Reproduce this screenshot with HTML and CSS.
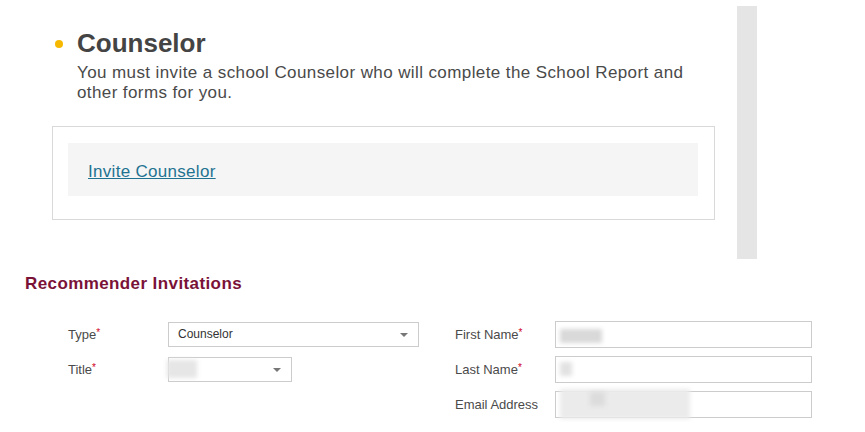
FILE: index.html
```html
<!DOCTYPE html>
<html lang="en">
<head>
    <meta charset="UTF-8">
    <meta name="viewport" content="width=device-width, initial-scale=1.0">
    <title>Counselor</title>
    <link rel="stylesheet" href="styles.css">
</head>
<body>
    <div class="top">
        <div class="section">
            <div class="section-head">
                <span class="bullet"></span>
                <h2>Counselor</h2>
            </div>
            <p class="intro">You must invite a school Counselor who will complete the School Report and other forms for you.</p>
            <div class="invite-box">
                <div class="invite-inner">
                    <a href="#" class="invite-link">Invite Counselor</a>
                </div>
            </div>
        </div>
        <div class="scrollbar"></div>
    </div>

    <div class="bottom">
        <h3>Recommender Invitations</h3>
        <form class="invite-form" onsubmit="event.preventDefault();">
            <div class="col">
                <div class="row">
                    <label>Type<span class="req">*</span></label>
                    <div class="select wide">Counselor<span class="arrow"></span></div>
                </div>
                <div class="row">
                    <label>Title<span class="req">*</span></label>
                    <div class="select narrow"><span class="smudge s1"></span><span class="arrow"></span></div>
                </div>
            </div>
            <div class="col">
                <div class="row">
                    <label>First Name<span class="req">*</span></label>
                    <div class="input"><span class="smudge s2"></span></div>
                </div>
                <div class="row">
                    <label>Last Name<span class="req">*</span></label>
                    <div class="input"><span class="smudge s3"></span></div>
                </div>
                <div class="row">
                    <label>Email Address</label>
                    <div class="input"><span class="smudge s4"></span><span class="smudge s5"></span></div>
                </div>
            </div>
        </form>
    </div>
</body>
</html>
```

FILE: styles.css
```css
body {
    margin: 0;
    background: #fff;
    font-family: "Liberation Sans", Arial, sans-serif;
    color: #444;
}
.top {
    display: flex;
    height: 260px;
}
.section {
    width: 663px;
    padding: 28px 0 0 52px;
}
.section-head {
    display: flex;
    align-items: center;
    height: 30px;
}
.bullet {
    width: 8px;
    height: 8px;
    margin: 2px 14px 0 3px;
    border-radius: 50%;
    background: #f6b800;
}
.section-head h2 {
    margin: 0;
    font-size: 26px;
    line-height: 30px;
    color: #444;
}
.intro {
    margin: 5px 0 0 25px;
    font-size: 17px;
    line-height: 20px;
    letter-spacing: 0.4px;
    color: #4a4a4a;
    width: 630px;
}
.invite-box {
    margin-top: 23px;
    border: 1px solid #d9d9d9;
    padding: 16px 16px 23px 15px;
}
.invite-inner {
    background: #f5f5f5;
    height: 53px;
    display: flex;
    align-items: center;
    padding: 4px 0 0 20px;
    box-sizing: border-box;
}
.invite-link {
    color: #1f7391;
    font-size: 17px;
    letter-spacing: 0.3px;
    text-decoration: underline;
}
.scrollbar {
    width: 20px;
    height: 253px;
    margin: 6px 0 0 22px;
    background: #e5e5e5;
}
.bottom {
    padding: 14px 0 0 25px;
}
.bottom h3 {
    margin: 0;
    font-size: 17px;
    line-height: 20px;
    letter-spacing: 0.4px;
    color: #7a1238;
}
.invite-form {
    display: grid;
    grid-template-columns: 387px 357px;
    margin: 23px 0 0 43px;
}
.row {
    display: flex;
    align-items: center;
    height: 35px;
}
.row label {
    flex-shrink: 0;
    width: 100px;
    font-size: 13px;
    color: #4a4a4a;
}
.req {
    color: #d0021b;
    font-size: 10px;
    vertical-align: top;
}
.select {
    position: relative;
    box-sizing: border-box;
    height: 25px;
    border: 1px solid #ccc;
    padding-left: 9px;
    font-size: 12px;
    line-height: 23px;
    color: #333;
}
.select.wide { width: 251px; }
.select.narrow { width: 124px; }
.arrow {
    position: absolute;
    right: 10px;
    top: 10px;
    border-left: 4px solid transparent;
    border-right: 4px solid transparent;
    border-top: 4px solid #777;
}
.input {
    position: relative;
    box-sizing: border-box;
    width: 257px;
    height: 27px;
    border: 1px solid #ccc;
}
.smudge {
    position: absolute;
    background: #e2e2e2;
    filter: blur(2px);
}
.s1 { left: -2px; top: 2px; width: 30px; height: 18px; background: #e6e6e6; }
.s2 { left: 4px; top: 7px; width: 42px; height: 14px; background: #d9d9d9; }
.s3 { left: 4px; top: 5px; width: 12px; height: 14px; }
.s4 { left: 4px; top: -3px; width: 130px; height: 30px; background: #ebebeb; }
.s5 { left: 34px; top: 0; width: 15px; height: 14px; background: #dcdcdc; }
```
